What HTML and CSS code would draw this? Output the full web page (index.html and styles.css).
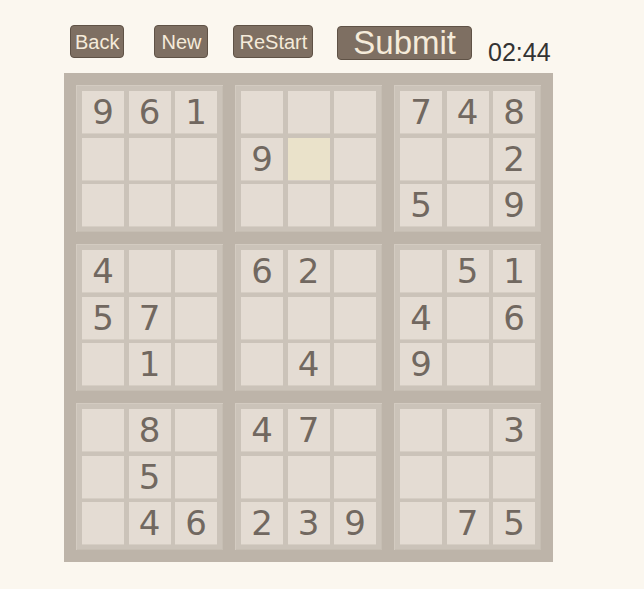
FILE: index.html
```html
<!DOCTYPE html>
<html>
<head>
<meta charset="utf-8">
<title>Sudoku</title>
<link rel="stylesheet" href="styles.css">
</head>
<body>
<div class="page">
  <div class="toolbar">
    <button class="btn btn-back">Back</button>
    <button class="btn btn-new">New</button>
    <button class="btn btn-restart">ReStart</button>
    <button class="btn btn-submit">Submit</button>
    <div class="timer">02:44</div>
  </div>
  <div class="board">
    <div class="box">
      <div class="cell">9</div><div class="cell">6</div><div class="cell">1</div>
      <div class="cell"></div><div class="cell"></div><div class="cell"></div>
      <div class="cell"></div><div class="cell"></div><div class="cell"></div>
    </div>
    <div class="box">
      <div class="cell"></div><div class="cell"></div><div class="cell"></div>
      <div class="cell">9</div><div class="cell selected"></div><div class="cell"></div>
      <div class="cell"></div><div class="cell"></div><div class="cell"></div>
    </div>
    <div class="box">
      <div class="cell">7</div><div class="cell">4</div><div class="cell">8</div>
      <div class="cell"></div><div class="cell"></div><div class="cell">2</div>
      <div class="cell">5</div><div class="cell"></div><div class="cell">9</div>
    </div>
    <div class="box">
      <div class="cell">4</div><div class="cell"></div><div class="cell"></div>
      <div class="cell">5</div><div class="cell">7</div><div class="cell"></div>
      <div class="cell"></div><div class="cell">1</div><div class="cell"></div>
    </div>
    <div class="box">
      <div class="cell">6</div><div class="cell">2</div><div class="cell"></div>
      <div class="cell"></div><div class="cell"></div><div class="cell"></div>
      <div class="cell"></div><div class="cell">4</div><div class="cell"></div>
    </div>
    <div class="box">
      <div class="cell"></div><div class="cell">5</div><div class="cell">1</div>
      <div class="cell">4</div><div class="cell"></div><div class="cell">6</div>
      <div class="cell">9</div><div class="cell"></div><div class="cell"></div>
    </div>
    <div class="box">
      <div class="cell"></div><div class="cell">8</div><div class="cell"></div>
      <div class="cell"></div><div class="cell">5</div><div class="cell"></div>
      <div class="cell"></div><div class="cell">4</div><div class="cell">6</div>
    </div>
    <div class="box">
      <div class="cell">4</div><div class="cell">7</div><div class="cell"></div>
      <div class="cell"></div><div class="cell"></div><div class="cell"></div>
      <div class="cell">2</div><div class="cell">3</div><div class="cell">9</div>
    </div>
    <div class="box">
      <div class="cell"></div><div class="cell"></div><div class="cell">3</div>
      <div class="cell"></div><div class="cell"></div><div class="cell"></div>
      <div class="cell"></div><div class="cell">7</div><div class="cell">5</div>
    </div>
  </div>
</div>
</body>
</html>
```
FILE: styles.css
```css
html, body {
  margin: 0;
  padding: 0;
  background: #fbf7ef;
}

body {
  font-family: "DejaVu Sans", "Liberation Sans", sans-serif;
}

.page {
  padding: 25px 0 0 64px;
}

.toolbar {
  display: flex;
  align-items: flex-start;
  height: 36px;
  margin-left: 6px;
}

.btn {
  box-sizing: border-box;
  height: 33px;
  padding: 2px 4px 0;
  margin: 0;
  border: 1px solid #5f5246;
  border-radius: 4px;
  background: #7e6f62;
  color: #f5ebda;
  font-family: "Liberation Sans", Arial, sans-serif;
  font-size: 20px;
  line-height: 29px;
  cursor: pointer;
}

.btn-back {
  margin-right: 30px;
}

.btn-new {
  padding: 2px 6px 0;
  margin-right: 25px;
}

.btn-restart {
  padding: 2px 5px 0;
  margin-right: 24px;
}

.btn-submit {
  height: 34px;
  margin-top: 1px;
  padding: 0 15px;
  font-size: 33px;
  line-height: 32px;
}

.timer {
  margin-left: 16px;
  margin-top: 13px;
  font-family: "Liberation Sans", Arial, sans-serif;
  font-size: 25px;
  line-height: 29px;
  color: #333333;
}

.board {
  box-sizing: border-box;
  width: 489px;
  height: 489px;
  margin-top: 12px;
  padding: 12px;
  background: #bdb4a9;
  display: grid;
  grid-template-columns: repeat(3, 147px);
  grid-template-rows: repeat(3, 147px);
  gap: 12px;
}

.box {
  box-sizing: border-box;
  padding: 6px;
  background: #cbc3b9;
  box-shadow: inset 1px 1px 0 #d3cbc1, inset -1px -1px 0 #c6beb3;
  display: grid;
  grid-template-columns: repeat(3, 42px);
  grid-template-rows: repeat(3, 42px);
  gap: 4.5px;
}

.cell {
  background: #e4dcd3;
  box-shadow: 0 1px 0 #d6cec4;
  display: flex;
  align-items: center;
  justify-content: center;
  font-size: 34px;
  color: #716860;
  line-height: 1;
}

.cell.selected {
  background: #eae2ca;
}
```
